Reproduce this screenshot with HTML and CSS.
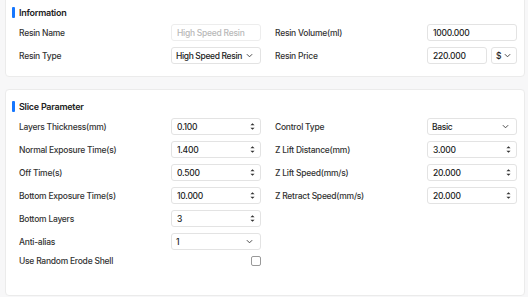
FILE: index.html
```html
<!DOCTYPE html>
<html lang="en">
<head>
    <meta charset="UTF-8">
    <title>Resin Settings</title>
    <link rel="stylesheet" href="styles.css">
</head>
<body>
    <section class="card card-first">
        <h2 class="card-title">Information</h2>
        <div class="form-grid">
            <label class="field-label">Resin Name</label>
            <div class="field disabled"><input type="text" placeholder="High Speed Resin" disabled></div>
            <label class="field-label">Resin Volume(ml)</label>
            <div class="field"><input type="text" value="1000.000"></div>

            <label class="field-label">Resin Type</label>
            <div class="field select"><span class="value">High Speed Resin</span><svg class="chevron" viewBox="0 0 8 5"><path d="M1 1l3 3 3-3" /></svg></div>
            <label class="field-label">Resin Price</label>
            <div class="price-row">
                <div class="field"><input type="text" value="220.000"></div>
                <div class="field select currency"><span class="value">$</span><svg class="chevron" viewBox="0 0 8 5"><path d="M1 1l3 3 3-3" /></svg></div>
            </div>
        </div>
    </section>

    <section class="card card-last">
        <h2 class="card-title">Slice Parameter</h2>
        <div class="form-grid">
            <label class="field-label">Layers Thickness(mm)</label>
            <div class="field number"><input type="text" value="0.100"><svg class="spin" viewBox="0 0 6 10"><path d="M3 1l2.5 2.5h-5zM3 9L.5 6.5h5z" /></svg></div>
            <label class="field-label">Control Type</label>
            <div class="field select"><span class="value">Basic</span><svg class="chevron" viewBox="0 0 8 5"><path d="M1 1l3 3 3-3" /></svg></div>

            <label class="field-label">Normal Exposure Time(s)</label>
            <div class="field number"><input type="text" value="1.400"><svg class="spin" viewBox="0 0 6 10"><path d="M3 1l2.5 2.5h-5zM3 9L.5 6.5h5z" /></svg></div>
            <label class="field-label">Z Lift Distance(mm)</label>
            <div class="field number"><input type="text" value="3.000"><svg class="spin" viewBox="0 0 6 10"><path d="M3 1l2.5 2.5h-5zM3 9L.5 6.5h5z" /></svg></div>

            <label class="field-label">Off Time(s)</label>
            <div class="field number"><input type="text" value="0.500"><svg class="spin" viewBox="0 0 6 10"><path d="M3 1l2.5 2.5h-5zM3 9L.5 6.5h5z" /></svg></div>
            <label class="field-label">Z Lift Speed(mm/s)</label>
            <div class="field number"><input type="text" value="20.000"><svg class="spin" viewBox="0 0 6 10"><path d="M3 1l2.5 2.5h-5zM3 9L.5 6.5h5z" /></svg></div>

            <label class="field-label">Bottom Exposure Time(s)</label>
            <div class="field number"><input type="text" value="10.000"><svg class="spin" viewBox="0 0 6 10"><path d="M3 1l2.5 2.5h-5zM3 9L.5 6.5h5z" /></svg></div>
            <label class="field-label">Z Retract Speed(mm/s)</label>
            <div class="field number"><input type="text" value="20.000"><svg class="spin" viewBox="0 0 6 10"><path d="M3 1l2.5 2.5h-5zM3 9L.5 6.5h5z" /></svg></div>

            <label class="field-label">Bottom Layers</label>
            <div class="field number"><input type="text" value="3"><svg class="spin" viewBox="0 0 6 10"><path d="M3 1l2.5 2.5h-5zM3 9L.5 6.5h5z" /></svg></div>
            <span></span><span></span>

            <label class="field-label">Anti-alias</label>
            <div class="field select"><span class="value">1</span><svg class="chevron" viewBox="0 0 8 5"><path d="M1 1l3 3 3-3" /></svg></div>
            <span></span><span></span>

            <label class="field-label">Use Random Erode Shell</label>
            <div class="check-cell"><span class="checkbox"></span></div>
            <span></span><span></span>
        </div>
    </section>
</body>
</html>
```

FILE: styles.css
```css
* {
    margin: 0;
    padding: 0;
    box-sizing: border-box;
}

body {
    background-color: #f7f7f8;
    font-family: Inter, "Noto Sans", sans-serif;
    font-size: 8.5px;
    font-weight: 500;
    letter-spacing: -0.25px;
    color: #333333;
    padding: 0 3px 0 5px;
}

.card {
    background-color: #ffffff;
    border: 1px solid #ebebeb;
    border-radius: 4px;
    padding: 10px 0 12px 6px;
    margin-bottom: 12px;
}

.card-first {
    margin-top: -5px;
}

.card-last {
    padding-top: 10px;
    padding-bottom: 29px;
    margin-bottom: 0;
}

.card-title {
    display: flex;
    align-items: center;
    height: 12px;
    font-size: 9px;
    font-weight: 600;
    color: #222222;
    margin-bottom: 6px;
}

.card-title::before {
    content: "";
    display: block;
    width: 3px;
    height: 11px;
    background-color: #1677ff;
    border-radius: 1px;
    margin-right: 4px;
}

.form-grid {
    display: grid;
    grid-template-columns: 138px 90px 138px 90px;
    column-gap: 14px;
    row-gap: 6px;
    padding-left: 7px;
    align-items: center;
}

.field-label {
    color: #333333;
    white-space: nowrap;
}

.field {
    display: flex;
    align-items: center;
    height: 17px;
    border: 1px solid #e3e3e3;
    border-radius: 3px;
    background-color: #ffffff;
    padding: 0 5px;
}

.field input {
    border: none;
    outline: none;
    background: transparent;
    font: inherit;
    letter-spacing: inherit;
    color: #222222;
    width: 100%;
    min-width: 0;
}

.field input::placeholder {
    color: #b8b8b8;
}

.field.disabled {
    border-color: #ededed;
}

.select {
    justify-content: space-between;
    color: #222222;
    white-space: nowrap;
    padding-left: 4px;
}

.select .value {
    letter-spacing: -0.35px;
}

.chevron {
    width: 7px;
    height: 5px;
    fill: none;
    stroke: #444444;
    stroke-width: 1.1;
    flex-shrink: 0;
    margin-right: 2px;
}

.spin {
    width: 5px;
    height: 9px;
    fill: #333333;
    flex-shrink: 0;
}

.price-row {
    display: flex;
    gap: 4px;
}

.price-row .field:first-child {
    flex: 1;
}

.currency {
    width: 26px;
    gap: 3px;
}

.check-cell {
    display: flex;
    justify-content: flex-end;
}

.checkbox {
    width: 10px;
    height: 10px;
    border: 1px solid #999999;
    border-radius: 2px;
}
```
